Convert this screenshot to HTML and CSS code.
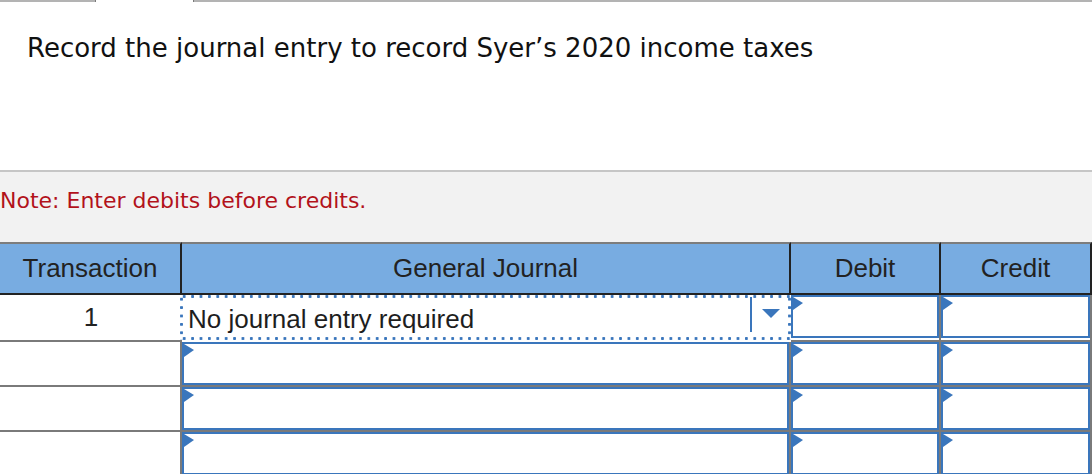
FILE: index.html
```html
<!DOCTYPE html>
<html lang="en">

<head>
    <meta charset="UTF-8">
    <meta name="viewport" content="width=device-width, initial-scale=1.0">
    <title>Journal Entry</title>
    <link rel="stylesheet" href="styles.css">
</head>

<body>
    <div class="tabs">
        <span class="tab-line tab-first"></span>
        <span class="tab-active"></span>
        <span class="tab-line tab-rest"></span>
    </div>

    <div class="question">
        <p>Record the journal entry to record Syer’s 2020 income taxes</p>
    </div>

    <div class="note">Note: Enter debits before credits.</div>

    <table class="journal">
        <colgroup>
            <col class="col-trans">
            <col class="col-gj">
            <col class="col-amt">
            <col class="col-amt-last">
        </colgroup>
        <thead>
            <tr>
                <th>Transaction</th>
                <th>General Journal</th>
                <th>Debit</th>
                <th>Credit</th>
            </tr>
        </thead>
        <tbody>
            <tr class="first-row">
                <td class="trans">1</td>
                <td class="gj">
                    <div class="select">
                        <span class="select-text">No journal entry required</span>
                        <span class="select-divider"></span>
                        <span class="select-arrow"></span>
                    </div>
                </td>
                <td><div class="field"></div></td>
                <td><div class="field"></div></td>
            </tr>
            <tr>
                <td class="trans"></td>
                <td><div class="field"></div></td>
                <td><div class="field"></div></td>
                <td><div class="field"></div></td>
            </tr>
            <tr>
                <td class="trans"></td>
                <td><div class="field"></div></td>
                <td><div class="field"></div></td>
                <td><div class="field"></div></td>
            </tr>
            <tr>
                <td class="trans"></td>
                <td><div class="field"></div></td>
                <td><div class="field"></div></td>
                <td><div class="field"></div></td>
            </tr>
        </tbody>
    </table>
</body>

</html>
```

FILE: styles.css
```css
body {
    margin: 0;
    width: 1092px;
    font-family: "DejaVu Sans", Verdana, sans-serif;
    color: #111111;
    background-color: #ffffff;
}

/* tab strip along the top */
.tabs {
    display: flex;
    height: 2px;
}

.tab-line {
    background-color: #b3b3b3;
}

.tab-first {
    width: 95px;
    border-right: 1px solid #7a7a7a;
}

.tab-active {
    width: 97px;
}

.tab-rest {
    flex: 1;
    border-left: 1px solid #7a7a7a;
}

.question {
    height: 168px;
}

.question p {
    margin: 0;
    padding: 30px 0 0 27px;
    font-size: 26px;
    line-height: 32px;
}

.note {
    height: 56px;
    border-top: 2px solid #c6c6c6;
    background-color: #f2f2f2;
    color: #b2121b;
    font-size: 22px;
    line-height: 30px;
    padding-top: 14px;
}

/* journal table */
.journal {
    width: 1092px;
    table-layout: fixed;
    border-collapse: separate;
    border-spacing: 0;
    font-family: "Liberation Sans", Arial, sans-serif;
    font-size: 26px;
    color: #222222;
}

.col-trans {
    width: 182px;
}

.col-gj {
    width: 609px;
}

.col-amt {
    width: 150px;
}

.col-amt-last {
    width: 151px;
}

.journal th {
    height: 48px;
    padding: 0 0 1px;
    font-weight: normal;
    background-color: #78ace1;
    border-top: 2px solid #7d7d7d;
    border-right: 2px solid #222222;
    border-bottom: 2px solid #222222;
}

.journal td {
    height: 43px;
    padding: 0;
    border-right: 2px solid #7a7a7a;
    border-bottom: 2px solid #7a7a7a;
    vertical-align: top;
}

.journal td.trans {
    text-align: center;
    line-height: 45px;
}

.first-row td.trans,
.first-row td.gj {
    border-right: none;
}

.first-row td.gj {
    border-bottom: none;
}

/* input cells with the little flag */
.field {
    position: relative;
    height: 39px;
    border: 2px solid #3a76bc;
}

.field::before {
    content: "";
    position: absolute;
    top: 0;
    left: 0;
    border-left: 10px solid #3a76bc;
    border-top: 6px solid transparent;
    border-bottom: 7px solid transparent;
}

/* selected dropdown in row 1, round dotted focus ring */
.select {
    display: flex;
    align-items: flex-start;
    height: 39px;
    margin-left: -2px;
    padding: 3px;
    background:
        radial-gradient(circle, #3a76bc 1.3px, transparent 1.7px) left top / 8.4px 3px repeat-x,
        radial-gradient(circle, #3a76bc 1.3px, transparent 1.7px) left bottom / 8.4px 3px repeat-x,
        radial-gradient(circle, #3a76bc 1.3px, transparent 1.7px) left top / 3px 8.4px repeat-y,
        radial-gradient(circle, #3a76bc 1.3px, transparent 1.7px) right top / 3px 8.4px repeat-y,
        #ffffff;
}

.select-text {
    flex: 1;
    padding-left: 5px;
    line-height: 42px;
    color: #1e1e1e;
}

.select-divider {
    width: 2px;
    height: 35px;
    margin-top: -1px;
    background-color: #3a76bc;
}

.select-arrow {
    width: 0;
    height: 0;
    margin: 11px 8px 0 10px;
    border-top: 9px solid #3a76bc;
    border-left: 9px solid transparent;
    border-right: 9px solid transparent;
}
```
